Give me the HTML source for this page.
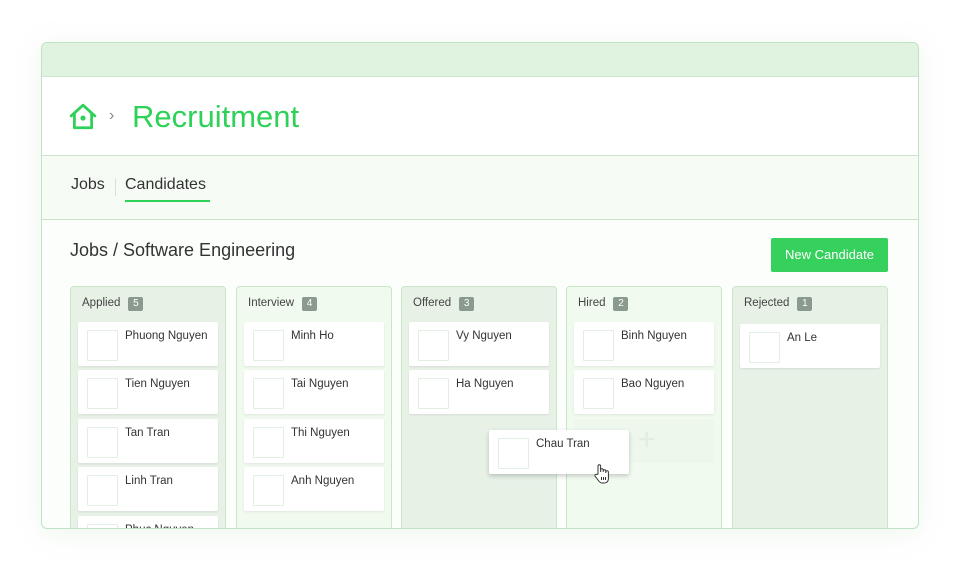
<!DOCTYPE html>
<html><head><style>
*{box-sizing:border-box;margin:0;padding:0}
body{width:960px;height:570px;background:#fff;font-family:"Liberation Sans",sans-serif;position:relative;overflow:hidden}
.win{position:absolute;left:41px;top:42px;width:878px;height:487px;border:1px solid #bfe3c3;border-radius:6px;overflow:hidden;background:#fbfefb;box-shadow:0 4px 30px rgba(120,170,120,.12)}
.top{position:absolute;left:0;top:0;right:0;height:34px;background:#e0f3e0;border-bottom:1px solid #cfe8cf}
.hdr{position:absolute;left:0;top:34px;right:0;height:79px;background:#fff;border-bottom:1px solid #c9e2cb}
.title{position:absolute;left:90px;top:22px;font-size:31px;color:#2fd158}
.chev{position:absolute;left:67px;top:30px;font-size:16px;color:#888}
.tabs{position:absolute;left:0;top:113px;right:0;height:64px;background:#f6fcf5;border-bottom:1px solid #c9e2cb}
.tab{position:absolute;top:20px;font-size:16px;color:#333}
.ul{position:absolute;left:83px;top:44px;width:85px;height:2px;background:#2fd158}
.sep{position:absolute;left:73px;top:22px;width:1px;height:18px;background:#ddd}
h2{position:absolute;left:28px;top:197px;font-size:18px;font-weight:normal;color:#333}
.btn{position:absolute;left:729px;top:195px;width:117px;height:34px;background:#36d05c;border-radius:2px;color:#fff;font-size:13px;text-align:center;line-height:34px}
.col{position:absolute;top:243px;width:156px;height:260px;border:1px solid #c9e6c9;border-radius:4px}
.d{background:#e7f1e6}.l{background:#f1faef}
.ch{position:absolute;left:11px;top:10px;font-size:11.5px;color:#444}
.b{display:inline-block;margin-left:8px;background:#8a9a8c;color:#fff;font-size:10px;width:15px;height:14px;line-height:14px;text-align:center;border-radius:2px}
.card{position:absolute;left:7px;width:140px;height:44px;background:#fff;border-radius:2px;box-shadow:0 1px 2px rgba(0,0,0,.08)}
.card i{position:absolute;left:9px;top:8px;width:31px;height:31px;border:1px solid #e2efe2;border-radius:1px}
.card span{position:absolute;left:47px;top:8px;font-size:11.5px;color:#333}
</style></head><body>
<div class="win">
<div class="top"></div>
<div class="hdr">
<svg style="position:absolute;left:27px;top:26px" width="28" height="28" viewBox="0 0 26 26" fill="none" stroke="#2fd158" stroke-width="2.6" stroke-linejoin="round" stroke-linecap="round"><path d="M2 12 L13 2 L24 12"/><path d="M5 10 V23 H21 V10"/><circle cx="13" cy="14" r="2.4" fill="#2fd158" stroke="none"/></svg>
<div class="chev">›</div>
<div class="title">Recruitment</div>
</div>
<div class="tabs"><div class="tab" style="left:29px">Jobs</div><div class="sep"></div><div class="tab" style="left:83px">Candidates</div><div class="ul"></div></div>
<h2>Jobs / Software Engineering</h2>
<div class="btn">New Candidate</div>
<div class="col d" style="left:28px"><div class="ch">Applied<span class="b">5</span></div>
<div class="card" style="top:35px"><i></i><span>Phuong Nguyen</span></div>
<div class="card" style="top:83px"><i></i><span>Tien Nguyen</span></div>
<div class="card" style="top:132px"><i></i><span>Tan Tran</span></div>
<div class="card" style="top:180px"><i></i><span>Linh Tran</span></div>
<div class="card" style="top:229px"><i></i><span>Phuc Nguyen</span></div></div>
<div class="col l" style="left:194px"><div class="ch">Interview<span class="b">4</span></div>
<div class="card" style="top:35px"><i></i><span>Minh Ho</span></div>
<div class="card" style="top:83px"><i></i><span>Tai Nguyen</span></div>
<div class="card" style="top:132px"><i></i><span>Thi Nguyen</span></div>
<div class="card" style="top:180px"><i></i><span>Anh Nguyen</span></div></div>
<div class="col d" style="left:359px"><div class="ch">Offered<span class="b">3</span></div>
<div class="card" style="top:35px"><i></i><span>Vy Nguyen</span></div>
<div class="card" style="top:83px"><i></i><span>Ha Nguyen</span></div></div>
<div class="col l" style="left:524px"><div class="ch">Hired<span class="b">2</span></div>
<div class="card" style="top:35px"><i></i><span>Binh Nguyen</span></div>
<div class="card" style="top:83px"><i></i><span>Bao Nguyen</span></div>
<div class="card" style="top:132px;background:#edf7ec;box-shadow:none"><span style="left:64px;top:4px;font-size:30px;color:#dfeedd">+</span></div></div>
<div class="col d" style="left:690px"><div class="ch">Rejected<span class="b">1</span></div>
<div class="card" style="top:37px"><i></i><span>An Le</span></div></div>
<div class="card" style="left:447px;top:387px;box-shadow:0 2px 5px rgba(0,0,0,.2)"><i></i><span>Chau Tran</span></div>
<svg style="position:absolute;left:551px;top:420px" width="20" height="22" viewBox="0 0 20 22" fill="#fff" stroke="#333" stroke-width="1"><path d="M5 11 V3 a1.3 1.3 0 0 1 2.6 0 V9 V7 a1.3 1.3 0 0 1 2.6 0 V9 V8 a1.3 1.3 0 0 1 2.6 0 V10 V9 a1.3 1.3 0 0 1 2.6 0 V16 Q15 20 11 20 H9 Q7 20 5 17 L2 13 a1.3 1.3 0 0 1 2-1.5 Z"/><path d="M8.5 14v3M10.5 14v3M12.5 14v3"/></svg>
</div>
</body></html>
